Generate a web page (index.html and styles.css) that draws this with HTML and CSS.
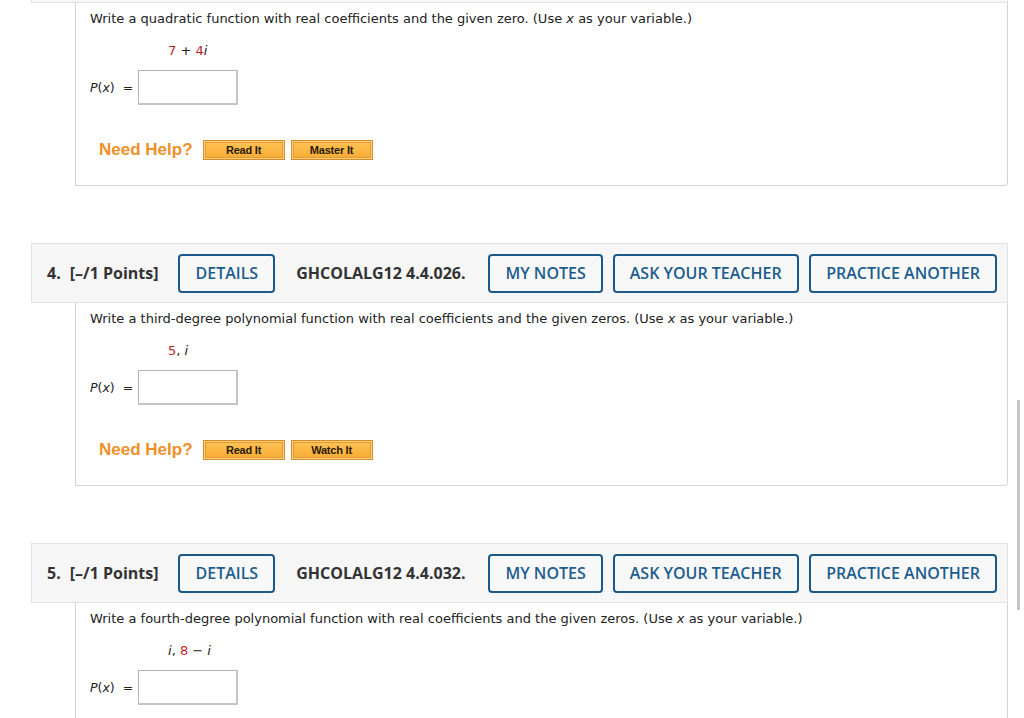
FILE: index.html
```html
<!DOCTYPE html>
<html>
<head>
<meta charset="utf-8">
<link rel="stylesheet" href="styles.css">
</head>
<body>
<div class="page">
  <section class="question">
    <div class="qhead-tail"></div>
    <div class="qbody">
      <p class="prompt">Write a quadratic function with real coefficients and the given zero. (Use <i>x</i> as your variable.)</p>
      <p class="zeros"><span class="red">7</span> + <span class="red">4</span><i>i</i></p>
      <div class="answer"><span class="px"><i>P</i>(<i>x</i>) &nbsp;=</span><span class="input"></span></div>
      <div class="help"><span class="need">Need Help?</span><span class="hbtn">Read It</span><span class="hbtn">Master It</span></div>
    </div>
  </section>

  <section class="question">
    <div class="qhead">
      <span class="qnum">4.</span><span class="pts">[–/1 Points]</span>
      <span class="btn">DETAILS</span>
      <span class="code">GHCOLALG12 4.4.026.</span>
      <span class="btn">MY NOTES</span>
      <span class="btn">ASK YOUR TEACHER</span>
      <span class="btn">PRACTICE ANOTHER</span>
    </div>
    <div class="qbody">
      <p class="prompt">Write a third-degree polynomial function with real coefficients and the given zeros. (Use <i>x</i> as your variable.)</p>
      <p class="zeros"><span class="red">5</span>, <i>i</i></p>
      <div class="answer"><span class="px"><i>P</i>(<i>x</i>) &nbsp;=</span><span class="input"></span></div>
      <div class="help"><span class="need">Need Help?</span><span class="hbtn">Read It</span><span class="hbtn">Watch It</span></div>
    </div>
  </section>

  <section class="question">
    <div class="qhead">
      <span class="qnum">5.</span><span class="pts">[–/1 Points]</span>
      <span class="btn">DETAILS</span>
      <span class="code">GHCOLALG12 4.4.032.</span>
      <span class="btn">MY NOTES</span>
      <span class="btn">ASK YOUR TEACHER</span>
      <span class="btn">PRACTICE ANOTHER</span>
    </div>
    <div class="qbody">
      <p class="prompt">Write a fourth-degree polynomial function with real coefficients and the given zeros. (Use <i>x</i> as your variable.)</p>
      <p class="zeros"><i>i</i>, <span class="red">8</span> − <i>i</i></p>
      <div class="answer"><span class="px"><i>P</i>(<i>x</i>) &nbsp;=</span><span class="input"></span></div>
    </div>
  </section>
</div>
<div class="scrollthumb"></div>
</body>
</html>
```
FILE: styles.css
```css
html, body {
  margin: 0;
  padding: 0;
  background: #fff;
  overflow: hidden;
}
.page {
  margin: 0 0 0 31px;
  width: 977px;
}
.question {
  margin-bottom: 57px;
}
.qhead-tail {
  height: 3px;
  box-sizing: border-box;
  background: #f6f6f6;
  border: 1px solid #e2e2e2;
  border-top: none;
}
.qhead {
  display: flex;
  align-items: center;
  height: 60px;
  box-sizing: border-box;
  padding: 0 10px 0 15px;
  background: #f6f6f6;
  border: 1px solid #e2e2e2;
  font-family: "Open Sans", sans-serif;
  font-size: 16px;
  color: #333;
}
.qnum {
  font-weight: 700;
  margin-right: 9px;
}
.pts {
  font-weight: 700;
  margin-right: 20px;
}
.code {
  font-weight: 700;
  margin: 0 23px 0 21px;
}
.btn {
  display: inline-flex;
  align-items: center;
  justify-content: center;
  height: 39px;
  box-sizing: border-box;
  padding: 0 15px;
  border: 2px solid #1b5a88;
  border-radius: 4px;
  color: #1d5d8e;
  font-weight: 600;
  background: #f8f8f8;
  white-space: nowrap;
  flex-shrink: 0;
}
.btn + .btn {
  margin-left: 10px;
}
.qhead .btn:last-child {
  margin-left: auto;
}
.qbody {
  margin-left: 44px;
  height: 183px;
  box-sizing: border-box;
  border: 1px solid #d4d4d4;
  border-top: none;
  border-radius: 0 0 4px 0;
  padding: 7px 0 0 14px;
  font-family: "DejaVu Sans", Verdana, sans-serif;
  font-size: 13px;
  color: #222;
}
.prompt {
  margin: 0;
  line-height: 18px;
}
.zeros {
  margin: 14px 0 0 78px;
  line-height: 18px;
}
.red {
  color: #c1232b;
}
.answer {
  display: flex;
  align-items: center;
  margin-top: 10px;
}
.px {
  font-size: 12.5px;
  width: 48px;
}
.input {
  width: 100px;
  height: 35px;
  box-sizing: border-box;
  border-style: solid;
  border-width: 1px 2px 2px 1px;
  border-color: #b5b5b5 #c4c4c4 #c4c4c4 #b5b5b5;
  background: #fff;
}
.help {
  display: flex;
  align-items: center;
  margin: 35px 0 0 9px;
}
.need {
  font-family: "Liberation Sans", Arial, sans-serif;
  font-weight: 700;
  font-size: 17px;
  color: #ef9029;
  margin-right: 10px;
}
.hbtn {
  display: inline-flex;
  align-items: center;
  justify-content: center;
  width: 82px;
  height: 20px;
  box-sizing: border-box;
  border: 1px solid #d98a2a;
  box-shadow: inset 0 0 0 1px #ffd27a, inset 0 0 0 2px #e29a35;
  background: linear-gradient(#ffc457, #f9aa33);
  font-family: "Liberation Sans", Arial, sans-serif;
  font-weight: 700;
  font-size: 11px;
  color: #2a1a08;
  letter-spacing: -0.2px;
}
.hbtn + .hbtn {
  margin-left: 6px;
}
.scrollthumb {
  position: fixed;
  left: 1017px;
  top: 400px;
  width: 3px;
  height: 210px;
  background: #c6c6c6;
}
```
